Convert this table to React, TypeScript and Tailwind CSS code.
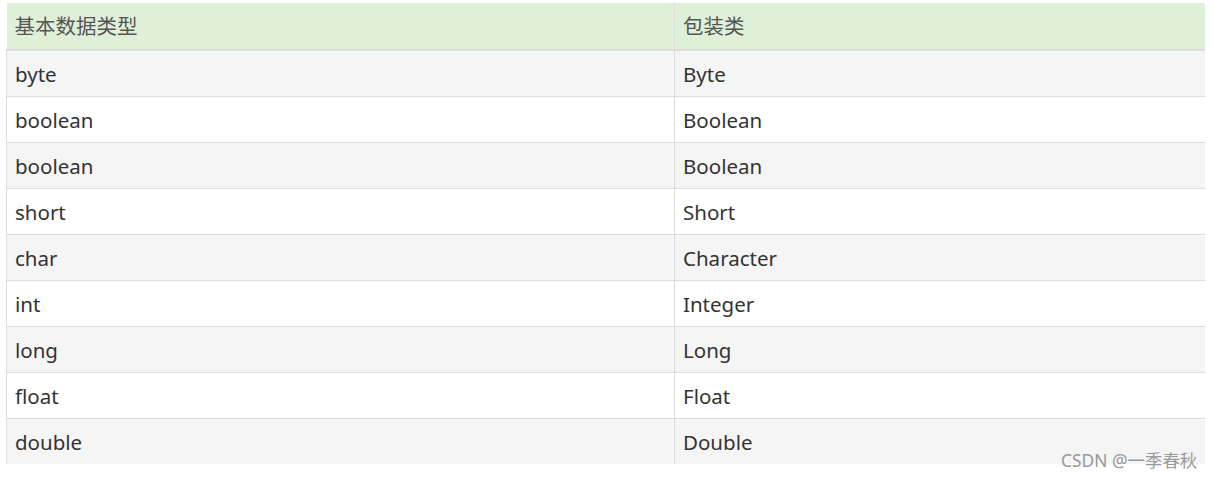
const rows: [string, string][] = [
  ['byte', 'Byte'],
  ['boolean', 'Boolean'],
  ['boolean', 'Boolean'],
  ['short', 'Short'],
  ['char', 'Character'],
  ['int', 'Integer'],
  ['long', 'Long'],
  ['float', 'Float'],
  ['double', 'Double'],
];

export default function App() {
  return (
    <div
      className="relative w-[1213px] h-[479px] bg-white pt-[3px] pl-[6px]"
      style={{ fontFamily: '"Noto Sans", "Noto Sans CJK SC", sans-serif' }}
    >
      <table className="w-[1199px] border-collapse table-fixed text-[20.5px] leading-none text-[#333]">
        <colgroup>
          <col className="w-[668px]" />
          <col />
        </colgroup>
        <thead>
          <tr className="bg-[#dff0d8] h-[47px] border-b-2 border-[#ddd]">
            <th className="text-left font-normal text-[#555] pl-[8px] pt-[1px] align-middle">基本数据类型</th>
            <th className="text-left font-normal text-[#555] pl-[8px] pt-[1px] align-middle border-l border-[#ddd]">包装类</th>
          </tr>
        </thead>
        <tbody>
          {rows.map(([a, b], i) => (
            <tr
              key={i}
              className={`h-[46px] ${i < rows.length - 1 ? 'border-b border-[#ddd]' : ''} ${i % 2 === 0 ? 'bg-[#f5f5f5]' : 'bg-white'}`}
            >
              <td className="pl-[8px] pt-[2px] border-l border-[#ddd] align-middle">{a}</td>
              <td className="pl-[8px] pt-[2px] border-l border-[#ddd] align-middle">{b}</td>
            </tr>
          ))}
        </tbody>
      </table>
      <span className="absolute left-[1061px] top-[452px] text-[17.4px] text-[#999] leading-none">
        CSDN @一季春秋
      </span>
    </div>
  );
}
